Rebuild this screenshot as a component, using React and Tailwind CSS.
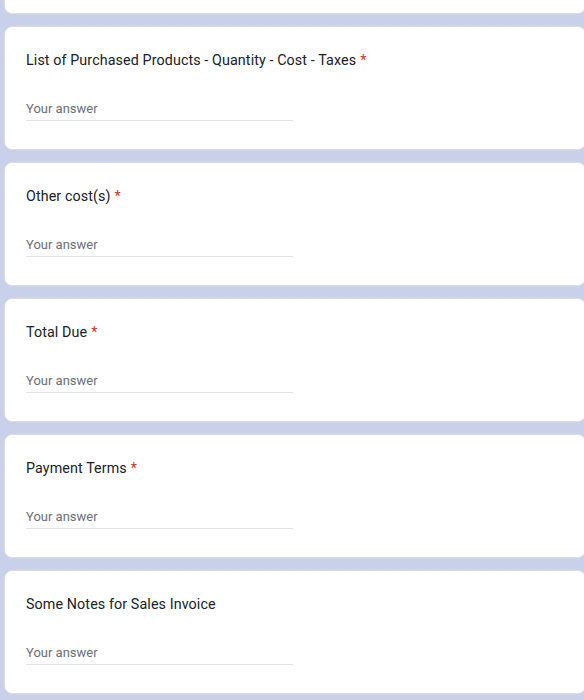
import React from 'react';

const questions = [
  { title: 'List of Purchased Products - Quantity - Cost - Taxes', required: true },
  { title: 'Other cost(s)', required: true },
  { title: 'Total Due', required: true },
  { title: 'Payment Terms', required: true },
  { title: 'Some Notes for Sales Invoice', required: false },
];

const Question = ({ title, required }) => (
  <div className="w-[582px] ml-[4px] shrink-0 bg-white rounded-lg border border-[#dadce0] pt-[21px] pb-[28px] px-[21px]">
    <div className="text-[14.3px] leading-[24px] text-[#202124] tracking-[0.1px]">
      {title}
      {required && <span className="text-[#d93025] ml-[4px]">*</span>}
    </div>
    <div className="mt-[27px] w-[267px] pb-[1px] border-b border-[#e3e3e3]">
      <input
        type="text"
        placeholder="Your answer"
        className="block w-full text-[13px] leading-[20px] h-[20px] text-[#202124] placeholder:text-[#6b6f74] outline-none bg-transparent"
      />
    </div>
  </div>
);

export default function App() {
  return (
    <div className="w-[584px] h-[700px] overflow-hidden bg-[#c9d1ea]" style={{ fontFamily: 'Roboto, "Noto Sans", sans-serif' }}>
      <div className="flex flex-col gap-[12px]">
        <div className="w-[582px] ml-[4px] h-[14px] bg-white rounded-b-lg border border-t-0 border-[#dadce0]" />
        {questions.map((q) => (
          <Question key={q.title} {...q} />
        ))}
      </div>
    </div>
  );
}
